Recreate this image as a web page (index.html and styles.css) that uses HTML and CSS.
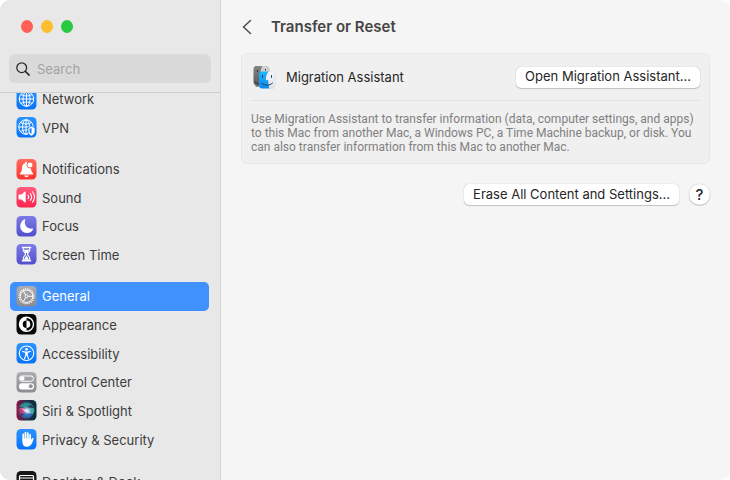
FILE: index.html
```html
<!DOCTYPE html>
<html lang="en">
<head>
<meta charset="utf-8">
<meta name="viewport" content="width=device-width, initial-scale=1">
<title>Transfer or Reset</title>
<link rel="stylesheet" href="styles.css">
</head>
<body>
<svg class="defs" aria-hidden="true">
  <defs>
    <linearGradient id="blue" x1="0" y1="0" x2="0" y2="1"><stop offset="0" stop-color="#2d93ff"/><stop offset="1" stop-color="#0573f8"/></linearGradient>
    <linearGradient id="red" x1="0" y1="0" x2="0" y2="1"><stop offset="0" stop-color="#ff6a5f"/><stop offset="1" stop-color="#fb372f"/></linearGradient>
    <linearGradient id="pink" x1="0" y1="0" x2="0" y2="1"><stop offset="0" stop-color="#ff5b7c"/><stop offset="1" stop-color="#fd2550"/></linearGradient>
    <linearGradient id="indigo" x1="0" y1="0" x2="0" y2="1"><stop offset="0" stop-color="#7d7be6"/><stop offset="1" stop-color="#524fcd"/></linearGradient>
    <linearGradient id="gray" x1="0" y1="0" x2="0" y2="1"><stop offset="0" stop-color="#adadb1"/><stop offset="1" stop-color="#8b8b90"/></linearGradient>
    <linearGradient id="siri" x1="0" y1="0" x2="1" y2="0"><stop offset="0" stop-color="#8c1545"/><stop offset=".5" stop-color="#27314f"/><stop offset="1" stop-color="#052f38"/></linearGradient>
    <radialGradient id="glow"><stop offset="0" stop-color="#fff"/><stop offset=".35" stop-color="#bcd9ee" stop-opacity=".85"/><stop offset="1" stop-color="#4b86c8" stop-opacity="0"/></radialGradient>
    <g id="globe" fill="none" stroke="#fff" stroke-width="2">
      <circle cx="21" cy="20" r="14.5"/><ellipse cx="21" cy="20" rx="7" ry="14.5"/>
      <path d="M21 5.500v29M6.500 20h29M10 11c6 4 16 4 22 0M10 29c6-4 16-4 22 0"/>
    </g>
  </defs>
</svg>
<div class="window">
  <aside class="sidebar">
    <header class="sidebar-head">
      <div class="lights">
        <button class="light close" type="button" aria-label="Close"></button>
        <button class="light minimize" type="button" aria-label="Minimize"></button>
        <button class="light zoom" type="button" aria-label="Zoom"></button>
      </div>
      <label class="search">
        <svg width="14" height="14" viewBox="0 0 14 14" fill="none" stroke="#2b2b2b" stroke-linecap="round" aria-hidden="true"><circle cx="5.700" cy="5.700" r="4.900" stroke-width="1.300"/><path d="M9.400 9.400l3.700 3.700" stroke-width="1.600"/></svg>
        <input type="search" placeholder="Search" aria-label="Search">
      </label>
    </header>
    <nav class="scroller" aria-label="Settings">
      <ul class="group two">
        <li><a href="#"><svg class="icon" viewBox="0 0 42 42"><rect x="1" width="40" height="41" rx="9" fill="url(#blue)"/><use href="#globe"/></svg>Network</a></li>
        <li><a href="#"><svg class="icon" viewBox="0 0 42 42"><rect x="1" width="40" height="41" rx="9" fill="url(#blue)"/><use href="#globe" x="-1"/><path d="M31 18.500l7 3v7c0 5-3 8-7 9.500-4-1.500-7-4.500-7-9.500v-7z" fill="#fff" stroke="#147ffb" stroke-width="1.500"/><path d="M31 22v12c-2-1.200-4-3-4-6v-4.500z" fill="#147ffb"/></svg>VPN</a></li>
      </ul>
      <ul class="group four">
        <li><a href="#"><svg class="icon" viewBox="0 0 42 42"><rect x="1" width="40" height="41" rx="9" fill="url(#red)"/><path d="M21 5.500c-1.800 0-3 1.200-3.200 2.800-4.300 1.500-5.600 5.200-5.800 9.700-.2 5-1 7.500-4 10.500-.8 1-.5 2.500 1 2.500h24c1.500 0 1.800-1.500 1-2.500-3-3-3.800-5.500-4-10.500zM16.500 33h9c-.6 2-2.300 3.200-4.500 3.200s-3.900-1.200-4.500-3.200z" fill="#fff"/><circle cx="28" cy="12" r="6" fill="#fff" stroke="#fc5147" stroke-width="1.800"/></svg>Notifications</a></li>
        <li><a href="#"><svg class="icon" viewBox="0 0 42 42"><rect x="1" width="40" height="41" rx="9" fill="url(#pink)"/><path d="M5 17c0-1.200.8-2 2-2h4l6-5.400c1-.9 2.400-.3 2.400 1v19c0 1.300-1.400 1.900-2.400 1L11 25H7c-1.200 0-2-.8-2-2z" fill="#fff"/><path d="M24 16.500c1.800 2.200 1.800 5 0 7M28.500 13c3.500 4.400 3.500 9.600 0 14M33 9.500c5.200 6.600 5.200 14.400 0 21" fill="none" stroke="#fff" stroke-width="2.200" stroke-linecap="round"/></svg>Sound</a></li>
        <li><a href="#"><svg class="icon" viewBox="0 0 42 42"><rect x="1" width="40" height="41" rx="9" fill="url(#indigo)"/><path d="M17 6.500c.8-.5 1.800.2 1.400 1.200-3.400 9.800 3.600 19.300 14.200 17.300 1.300-.2 2 .8 1.400 1.800-2.300 4.500-6.800 7.200-12 7.200-7.700 0-13.500-5.900-13.500-13.500 0-6 3.200-11.300 8.500-14z" fill="#fff"/></svg>Focus</a></li>
        <li><a href="#"><svg class="icon" viewBox="0 0 42 42"><rect x="1" width="40" height="41" rx="9" fill="url(#indigo)"/><path d="M13 7h16M13 33.500h16" stroke="#fff" stroke-width="3" stroke-linecap="round"/><path d="M14.500 8v4c0 4 4.500 5.500 4.500 8.300s-4.500 4.200-4.500 8.200v4h13v-4c0-4-4.500-5.400-4.500-8.200s4.500-4.300 4.500-8.300V8" fill="none" stroke="#fff" stroke-width="2.200"/><path d="M15.500 11.500h11l-3.500 6.500h-4zM21 23l5.500 8.500h-11z" fill="#fff"/></svg>Screen Time</a></li>
      </ul>
      <ul class="group six">
        <li><a class="selected" href="#" aria-current="page"><svg class="icon" viewBox="0 0 42 42"><rect x="1" width="40" height="41" rx="9" fill="url(#gray)"/><g fill="none" stroke="#fff"><circle cx="21" cy="20.500" r="14.800" stroke-width="2.600" stroke-dasharray="2.200 1.675"/><circle cx="21" cy="20.500" r="12.500" stroke-width="2"/><circle cx="21" cy="20.500" r="3" stroke-width="1.800"/><path d="M24 20.500h9.500M19.500 17.900l-4.800-8.200M19.500 23.100l-4.800 8.200" stroke-width="2"/></g></svg>General</a></li>
        <li><a href="#"><svg class="icon" viewBox="0 0 42 42"><rect x="1" width="40" height="41" rx="9" fill="#080808"/><circle cx="21" cy="20.500" r="14" fill="none" stroke="#fff" stroke-width="2.800"/><path d="M21 6.500a14 14 0 0 0 0 28v-6.500a7.500 7.500 0 0 1 0-15z" fill="#fff"/><path d="M21 13a7.500 7.500 0 0 1 0 15z" fill="#fff"/></svg>Appearance</a></li>
        <li><a href="#"><svg class="icon" viewBox="0 0 42 42"><rect x="1" width="40" height="41" rx="9" fill="url(#blue)"/><circle cx="21" cy="20.500" r="14.500" fill="none" stroke="#fff" stroke-width="2.200"/><circle cx="21" cy="12.500" r="2.600" fill="#fff"/><path d="M13 17l6 1.300h4l6-1.300M21 19v5M19.500 18.500v6l-2.500 7M22.500 18.500v6l2.500 7" fill="none" stroke="#fff" stroke-width="2.200" stroke-linecap="round" stroke-linejoin="round"/></svg>Accessibility</a></li>
        <li><a href="#"><svg class="icon" viewBox="0 0 42 42"><rect x="1" width="40" height="41" rx="9" fill="url(#gray)"/><rect x="7" y="8" width="28" height="10.500" rx="5.200" fill="none" stroke="#fff" stroke-width="2"/><circle cx="12.500" cy="13.200" r="4.500" fill="#fff"/><rect x="6" y="22.500" width="30" height="12.500" rx="6.200" fill="#fff"/><circle cx="29.500" cy="28.700" r="4" fill="#929297"/></svg>Control Center</a></li>
        <li><a href="#"><svg class="icon" viewBox="0 0 42 42"><rect x="1" width="40" height="41" rx="9" fill="url(#siri)"/><circle cx="21" cy="20.500" r="15.500" fill="#26375c"/><path d="M7 14C11 5 25 2 33 11c-7-2-13 2-14 8-4-4-8-6-12-5z" fill="#24a99c" opacity=".8"/><path d="M6 18c5-5 12-3 16 3-3 6-8 8-14 6z" fill="#e83475" opacity=".85"/><path d="M11 31c5-1 10-5 12-10 5 2 9 6 9 10-6 6-15 6-21 0z" fill="#2d76cf" opacity=".8"/><path d="M22 20c4-5 9-6 14-3 1 5-1 9-3 12-3-5-6-8-11-9z" fill="#3fcdb4" opacity=".75"/><circle cx="22" cy="21" r="11" fill="url(#glow)"/><path d="M9 16c7 2 18 5 24 11-8 0-15-3-24-11z" fill="#fff" opacity=".5"/><circle cx="21" cy="20.500" r="15.500" fill="none" stroke="#7ca6bd" stroke-opacity=".55"/></svg>Siri &amp; Spotlight</a></li>
        <li><a href="#"><svg class="icon" viewBox="0 0 42 42"><rect x="1" width="40" height="41" rx="9" fill="url(#blue)"/><path d="M14.500 21V11M19 19V7.500M23.700 19V8.500M28.300 21v-9" stroke="#fff" stroke-width="3.600" stroke-linecap="round"/><path d="M12.700 19h17.400v3l1.600-2.800c1-1.700 3.700-1 3.200 1.100-1.200 4.500-3 9-5.300 11.700-2 2.400-4.600 3.500-7.800 3.500-6 0-9.100-4-9.100-10z" fill="#fff"/></svg>Privacy &amp; Security</a></li>
      </ul>
      <ul class="group one">
        <li><a href="#"><svg class="icon" viewBox="0 0 42 42"><rect x="1" width="40" height="41" rx="9" fill="#161616"/><rect x="7" y="9" width="28" height="23" rx="2" fill="none" stroke="#fff" stroke-width="2.400"/><path d="M8 14h26" stroke="#fff" stroke-width="2"/><path d="M12 27h18" stroke="#fff" stroke-width="4"/></svg>Desktop &amp; Dock</a></li>
      </ul>
    </nav>
  </aside>
  <main class="content">
    <header class="title-bar">
      <button class="back" type="button" aria-label="Back"><svg width="10" height="16" viewBox="0 0 10 16" fill="none" stroke="#4d4d4d" stroke-width="1.500" stroke-linecap="round" stroke-linejoin="round"><path d="M8.500 1.500L1.500 8l7 6.500"/></svg></button>
      <h1>Transfer or Reset</h1>
    </header>
    <section class="card">
      <div class="card-row">
        <svg class="app-icon" viewBox="0 0 48 48" aria-hidden="true">
          <defs><linearGradient id="old" x1="0" y1="0" x2="0" y2="1"><stop offset="0" stop-color="#858585"/><stop offset="1" stop-color="#5a5a5a"/></linearGradient><linearGradient id="face" x1="0" y1="0" x2="0" y2="1"><stop offset="0" stop-color="#1fb5ff"/><stop offset="1" stop-color="#0b88ee"/></linearGradient><linearGradient id="pale" x1="0" y1="0" x2="0" y2="1"><stop offset="0" stop-color="#f6f7fb"/><stop offset="1" stop-color="#dde1ec"/></linearGradient></defs>
          <path d="M9 2h13c-3 7-4 13-4 19v20h-7c-4 0-7-3-7-7V9c0-4 2-7 5-7z" fill="url(#old)"/>
          <path d="M22 2h8c4 0 7 3 7 7v10H18c0-6 1-12 4-17z" fill="#cfcfcf"/>
          <path d="M12 10v4M28 8v3M7 33c3 3 6 5 9 5M8 42h7" fill="none" stroke="#333" stroke-width="2"/>
          <path d="M21 13h13c-3 5-5 11-5 17h5c0 6 1 12 2 17H21c-4 0-6-3-6-7V20c0-4 2-7 6-7z" fill="url(#face)"/>
          <path d="M34 13h7c4 0 6 3 6 7v20c0 4-2 7-6 7h-5c-1-5-2-11-2-17h-5c0-6 2-12 5-17z" fill="url(#pale)" stroke="#cdd1da" stroke-width=".8"/>
          <path d="M22 21v4M40 21v4M20 36c6 6 16 6 22 0" fill="none" stroke="#24405b" stroke-width="2" stroke-linecap="round"/>
        </svg>
        <h2>Migration Assistant</h2>
        <button class="push" type="button">Open Migration Assistant...</button>
      </div>
      <p>Use Migration Assistant to transfer information (data, computer settings, and apps) to this Mac from another Mac, a Windows PC, a Time Machine backup, or disk. You can also transfer information from this Mac to another Mac.</p>
    </section>
    <div class="actions">
      <button class="push" type="button">Erase All Content and Settings...</button>
      <button class="help" type="button" aria-label="Help">?</button>
    </div>
  </main>
</div>
</body>
</html>
```
FILE: styles.css
```css
* {
  box-sizing: border-box;
}

body {
  margin: 0;
  background: #fff;
  color: #262626;
  font: 13px/16px Inter, "Liberation Sans", sans-serif;
}

button,
input {
  margin: 0;
  padding: 0;
  border: 0;
  font: inherit;
  color: inherit;
}

.defs {
  position: absolute;
  width: 0;
  height: 0;
}

.window {
  display: flex;
  height: 100vh;
  overflow: hidden;
  border-radius: 10px;
  background: #f5f5f5;
}

.sidebar {
  display: flex;
  flex: none;
  flex-direction: column;
  width: 221px;
  border-right: 1px solid #d6d6d6;
  background: #e8e8e8;
}

.sidebar-head {
  flex: none;
  padding: 20px 9px 9px;
  border-bottom: 1px solid #d0d0d0;
}

.lights {
  display: flex;
  gap: 8px;
  padding: 0 12px;
}

.light {
  width: 12px;
  height: 13px;
  border-radius: 50%;
}

.close { background: #ff5f57; }
.minimize { background: #febc2e; }
.zoom { background: #28c840; }

.search {
  display: flex;
  align-items: center;
  gap: 7px;
  height: 29px;
  margin-top: 21px;
  padding: 0 7px;
  border-radius: 6px;
  background: #dadada;
}

.search input {
  flex: 1;
  min-width: 0;
  outline: 0;
  background: none;
  appearance: none;
}

.search input::placeholder {
  color: #a3a3a3;
  opacity: 1;
}

.scroller {
  flex: 1;
  min-height: 0;
  overflow: hidden;
}

.group {
  display: grid;
  grid-auto-rows: 1fr;
  margin: 0 11px 13px 10px;
  padding: 0;
  list-style: none;
}

/* The list is scrolled so its first row slides under the header. */
.group:first-child {
  margin-top: -8px;
}

.one { height: 29px; }
.two { height: 57px; }
.four { height: 114px; }
.six { height: 172px; }

.group a {
  display: flex;
  align-items: center;
  gap: 5px;
  height: 100%;
  padding: 0 6px;
  border-radius: 5px;
  color: #3c3c3c;
  text-decoration: none;
}

.group .selected {
  background: #3f92fd;
  color: #fff;
}

.icon {
  flex: none;
  width: 21px;
  height: 21px;
}

.content {
  flex: 1;
  min-width: 0;
  padding: 16px 20px;
}

.title-bar {
  display: flex;
  align-items: center;
  gap: 19px;
  height: 22px;
  padding-left: 1px;
}

.back {
  display: flex;
  background: none;
}

h1 {
  margin: 0;
  color: #464646;
  font-size: 15px;
  font-weight: 600;
}

.card {
  margin-top: 15px;
  padding: 0 9px 9px;
  border: 1px solid #e7e7e7;
  border-radius: 6px;
  background: #f0f0f0;
}

.card-row {
  display: flex;
  align-items: center;
  gap: 10px;
  height: 47px;
  border-bottom: 1px solid #e2e2e2;
}

.app-icon {
  width: 25px;
  height: 24px;
}

h2 {
  flex: 1;
  margin: 0;
  font-size: 13px;
  font-weight: 400;
}

.card p {
  margin: 11px 0 0;
  color: #808080;
  font-family: Roboto, "Liberation Sans", sans-serif;
  font-size: 12px;
  line-height: 14px;
}

.push {
  height: 21px;
  padding: 0 9px 2px;
  border-radius: 5px;
  background: #fff;
  box-shadow: 0 0 1px rgba(0, 0, 0, .3), 0 1px 1px rgba(0, 0, 0, .18);
}

.actions {
  display: flex;
  align-items: center;
  justify-content: flex-end;
  gap: 10px;
  margin-top: 20px;
}

.help {
  width: 21px;
  height: 21px;
  border-radius: 50%;
  background: #fff;
  box-shadow: 0 0 1px rgba(0, 0, 0, .3), 0 1px 1px rgba(0, 0, 0, .18);
  font-size: 15px;
  font-weight: 500;
}
```
